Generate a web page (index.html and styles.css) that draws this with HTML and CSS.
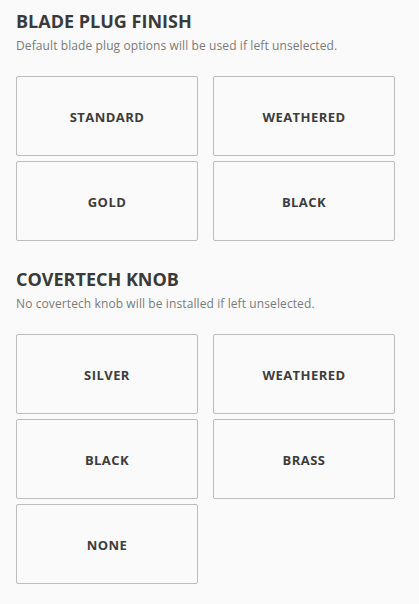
FILE: index.html
```html
<!DOCTYPE html>
<html>
<head>
<meta charset="utf-8">
<link rel="stylesheet" href="styles.css">
</head>
<body>
<section class="group">
  <h2 class="title">BLADE PLUG FINISH</h2>
  <p class="desc">Default blade plug options will be used if left unselected.</p>
  <div class="options">
    <button class="opt">STANDARD</button>
    <button class="opt">WEATHERED</button>
    <button class="opt">GOLD</button>
    <button class="opt">BLACK</button>
  </div>
</section>
<section class="group">
  <h2 class="title">COVERTECH KNOB</h2>
  <p class="desc">No covertech knob will be installed if left unselected.</p>
  <div class="options">
    <button class="opt">SILVER</button>
    <button class="opt">WEATHERED</button>
    <button class="opt">BLACK</button>
    <button class="opt">BRASS</button>
    <button class="opt">NONE</button>
  </div>
</section>
</body>
</html>
```

FILE: styles.css
```css
html, body {
  margin: 0;
  padding: 0;
  background: #fafafa;
}
body {
  padding: 9px 16px 0 16px;
  font-family: "Open Sans", "Liberation Sans", sans-serif;
  color: #3a3a3a;
}
.group {
  margin-bottom: 26px;
}
.title {
  margin: 0;
  font-size: 18px;
  line-height: 24px;
  font-weight: 700;
  color: #3a3a3a;
}
.desc {
  margin: 5px 0 0 0;
  font-size: 12px;
  line-height: 16px;
  letter-spacing: 0.1px;
  color: #7a7a7a;
}
.options {
  margin-top: 22px;
  display: grid;
  grid-template-columns: 182px 182px;
  column-gap: 15px;
  row-gap: 5px;
}
.opt {
  height: 80px;
  background: #fafafa;
  border: 1px solid #bdbdbd;
  border-radius: 2px;
  font-family: "Open Sans", "Liberation Sans", sans-serif;
  font-size: 13px;
  font-weight: 700;
  color: #3d3d3d;
  padding: 1px 0 0 0;
  letter-spacing: 0.45px;
}
```
